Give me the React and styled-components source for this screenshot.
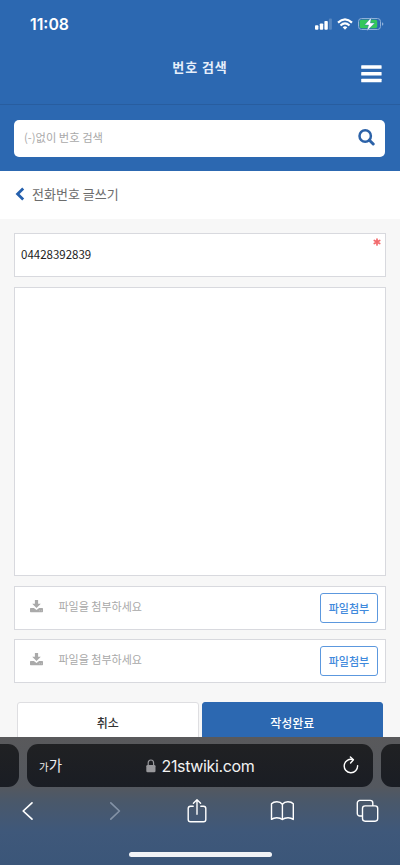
import styled, { createGlobalStyle } from 'styled-components';

const GlobalStyle = createGlobalStyle`
  * {
    box-sizing: border-box;
  }
  body {
    margin: 0;
    background: #f7f7f7;
    font-family: "Noto Sans CJK KR", sans-serif;
  }
  svg {
    display: block;
    flex: none;
  }
  input, textarea, button {
    font-family: inherit;
    margin: 0;
    outline: none;
  }
`

const Screen = styled.div`
  width: 400px;
  height: 865px;
  display: flex;
  flex-direction: column;
  overflow: hidden;
  background: #f7f7f7;
`

const StatusBar = styled.div`
  height: 46px;
  padding: 2px 16px 0 30px;
  display: flex;
  align-items: center;
  justify-content: space-between;
  background: #2c68b1;
  color: #fff;
`

const Clock = styled.span`
  padding-top: 1px;
  font: 600 15.8px/20px Inter, sans-serif;
`

const StatusIcons = styled.div`
  display: flex;
  align-items: center;
  gap: 5px;
`

const Header = styled.header`
  height: 59px;
  padding: 0 18px;
  display: grid;
  grid-template-columns: 21px 1fr 21px;
  background: #2c68b1;
  border-bottom: 1px solid #285d9f;
  color: #fff;
`

const HeaderTitle = styled.h1`
  grid-column: 2;
  margin: 11px 0 0;
  text-align: center;
  font-size: 13px;
  line-height: 20px;
  font-weight: 700;
  letter-spacing: 0.9px;
  color: #e6eefa;
`

const MenuButton = styled.button`
  align-self: start;
  margin-top: 19px;
  padding: 0;
  border: 0;
  background: none;
  color: #fff;
`

const SearchArea = styled.div`
  height: 66px;
  padding: 15px 15px 14px 14px;
  background: #2c68b1;
`

const SearchBox = styled.div`
  height: 37px;
  padding: 0 10.5px 3px 10px;
  display: flex;
  align-items: center;
  background: #fff;
  border-radius: 5px;
  color: #2c62a8;
`

const SearchInput = styled.input`
  flex: 1;
  min-width: 0;
  height: 20px;
  padding: 0 0 1px;
  border: 0;
  font-size: 11.3px;
  &::placeholder {
    color: #a9a9a9;
  }
`

const PageTitle = styled.div`
  height: 48px;
  padding: 0 15px 2px;
  display: flex;
  align-items: center;
  gap: 7px;
  background: #fff;
  color: #2560ad;
`

const PageTitleText = styled.h2`
  margin: 0;
  font-size: 13px;
  line-height: 20px;
  font-weight: 400;
  color: #6c6c6c;
`

const Form = styled.form`
  flex: 1;
  min-height: 0;
  overflow: hidden;
  padding: 14px 14px 0;
  display: flex;
  flex-direction: column;
`

const Field = styled.div`
  flex: none;
  position: relative;
  height: ${props => props.$height}px;
  margin-bottom: ${props => props.$gap}px;
  padding: ${props => props.$padding || '0'};
  display: flex;
  align-items: center;
  background: #fff;
  border: 1px solid #d8d9de;
`

const NumberInput = styled.input`
  flex: 1;
  height: 20px;
  padding: 0;
  border: 0;
  background: none;
  font-size: 11.5px;
  color: #222;
`

const Required = styled.span`
  position: absolute;
  top: 4px;
  right: 4px;
  color: #f26a6d;
`

const Content = styled.textarea`
  flex: 1;
  height: 100%;
  border: 0;
  resize: none;
  background: none;
`

const FileIcon = styled.span`
  width: 29px;
  padding-bottom: 4px;
  color: #aaa;
`

const FileText = styled.span`
  flex: 1;
  padding-bottom: 4px;
  font-size: 11px;
  line-height: 20px;
  color: #a8a8a8;
`

const FileButton = styled.button`
  width: 58px;
  height: 30px;
  padding: 0;
  border: 1px solid #5c98de;
  border-radius: 3px;
  background: #fff;
  font-size: 11px;
  font-weight: 500;
  line-height: 26px;
  color: #4089dc;
`

const Actions = styled.div`
  flex: none;
  margin: 10px 3px 0;
  display: flex;
  gap: 3px;
`

const ActionButton = styled.button`
  flex: 1;
  height: 41px;
  padding: 0;
  border: 1px solid ${props => (props.$primary ? '#2c68b1' : '#dedee1')};
  border-radius: 3px;
  background: ${props => (props.$primary ? '#2c68b1' : '#fff')};
  color: ${props => (props.$primary ? '#fff' : '#333')};
  font-size: 12px;
  font-weight: 500;
  line-height: 38px;
`

const BrowserBar = styled.footer`
  flex: none;
  height: 128px;
  display: flex;
  flex-direction: column;
  background: linear-gradient(#59595b 0, #54585f 50px, #4a586a 64px, #3f587a 94px, #3b5679 128px);
  color: #fff;
`

const TabStrip = styled.div`
  height: 43px;
  margin-top: 7px;
  display: flex;
  gap: 8px;
`

const SideTab = styled.div`
  width: 19px;
  background: linear-gradient(#202123, #1a1d24);
  border-radius: ${props => (props.$right ? '11px 0 0 11px' : '0 11px 11px 0')};
`

const AddressBar = styled.div`
  flex: 1;
  padding: 0 14px 0 12px;
  display: grid;
  grid-template-columns: 40px 1fr 40px;
  align-items: center;
  background: linear-gradient(#202123, #1a1d24);
  border-radius: 11px;
`

const TextSize = styled.span`
  font-size: 14.5px;
  line-height: 20px;
  color: #eee;
  small {
    font-size: 10.5px;
  }
`

const Url = styled.span`
  padding-left: 2px;
  display: flex;
  align-items: center;
  justify-content: center;
  gap: 6px;
  font: 400 16px/20px Inter, sans-serif;
  letter-spacing: -0.35px;
  color: #f2f2f2;
`

const Reload = styled.span`
  justify-self: end;
`

const Toolbar = styled.nav`
  height: 48px;
  padding: 0 20px 0 16px;
  display: flex;
  align-items: center;
  justify-content: space-between;
`

const HomeIndicator = styled.div`
  width: 143px;
  height: 5px;
  margin: 17px auto 0;
  border-radius: 3px;
  background: #f1f3f6;
`

const SignalIcon = () => (
  <svg width="18" height="12" viewBox="0 0 18 12" fill="#fff">
    <rect x="1" y="7.3" width="3.4" height="4.4" rx="0.9" />
    <rect x="5.8" y="5.4" width="3.4" height="6.3" rx="0.9" />
    <rect x="10.4" y="2.9" width="3.4" height="8.8" rx="0.9" />
    <rect x="14.9" y="0.5" width="3" height="11.2" rx="0.9" opacity="0.2" />
  </svg>
)

const WifiIcon = () => (
  <svg width="16" height="12" viewBox="0 0 16 12" fill="none" stroke="#fff" strokeWidth="2.2">
    <path d="M1 4.6Q8-1.8 15 4.6" />
    <path d="M3.5 7.5Q8 3.4 12.5 7.5" />
    <path d="M5.7 9.2Q8 7.3 10.3 9.2L8 11.7z" fill="#fff" stroke="none" />
  </svg>
)

const BatteryIcon = () => (
  <svg width="26" height="14" viewBox="0 0 26 14">
    <rect x="0.5" y="1.5" width="22" height="11" rx="3" fill="none" stroke="#8fb0d9" />
    <rect x="1.7" y="2.7" width="17.5" height="8.6" rx="1.8" fill="#34c75a" />
    <path d="M24 5.2q1.4.5 1.4 1.8T24 8.8z" fill="#8fb0d9" />
    <path d="M13.4.2L6.6 8h4L8.8 14 16.8 6H12.4z" fill="#fff" stroke="#2c68b1" strokeWidth="0.4" />
  </svg>
)

const MenuIcon = () => (
  <svg width="21" height="18" viewBox="0 0 21 18" fill="currentColor">
    <rect x="0.2" y="0.2" width="20.4" height="3.6" rx="0.6" />
    <rect x="0.2" y="7" width="20.4" height="3.6" rx="0.6" />
    <rect x="0.2" y="13.7" width="20.4" height="3.6" rx="0.6" />
  </svg>
)

const SearchIcon = () => (
  <svg width="17" height="17" viewBox="0 0 17 17" fill="none" stroke="currentColor">
    <circle cx="7.2" cy="7" r="5.7" strokeWidth="2.5" />
    <path d="M11.4 11.2l3.8 3.8" strokeWidth="3" strokeLinecap="round" />
  </svg>
)

const ChevronIcon = () => (
  <svg width="10" height="14" viewBox="0 0 10 14" fill="none" stroke="currentColor" strokeWidth="2.8">
    <path d="M8.2 1.6L2.6 7l5.6 5.4" />
  </svg>
)

const RequiredIcon = () => (
  <svg width="8" height="8" viewBox="0 0 8 8" fill="none" stroke="currentColor" strokeWidth="1.7" strokeLinecap="round">
    <path d="M4 1v6M1.3 2.4l5.4 3.2M6.7 2.4L1.3 5.6" />
  </svg>
)

const DownloadIcon = () => (
  <svg width="13" height="13" viewBox="0 0 13 13" fill="currentColor">
    <path d="M4.9 0h3.2v3.8h2.7L6.5 8 2.2 3.8h2.7z" />
    <path d="M.7 8h3.2l2.6 2.1L9.1 8h3.2q.7 0 .7.7v2.9q0 .7-.7.7H.7q-.7 0-.7-.7V8.7Q0 8 .7 8z" />
    <path d="M9.3 10.7h.7M11 10.7h.7" stroke="#fff" strokeWidth="0.4" />
  </svg>
)

const LockIcon = () => (
  <svg width="10" height="14" viewBox="0 0 10 14">
    <rect x="0.3" y="6" width="9.2" height="7.3" rx="1.3" fill="#98989c" />
    <path d="M2.2 6.4V3.9a2.7 2.9 0 0 1 5.4 0v2.5" fill="none" stroke="#98989c" strokeWidth="1.2" />
  </svg>
)

const ReloadIcon = () => (
  <svg width="16" height="20" viewBox="0 0 16 20" fill="none" stroke="#fff" strokeWidth="1.4" strokeLinecap="round" strokeLinejoin="round">
    <path d="M14.6 9.6A6.7 6.7 0 1 1 9.8 3.6" />
    <path d="M7.4.9L10.4 3.8 7.6 7" />
  </svg>
)

const ArrowIcon = ({ right }) => (
  <svg width="24" height="24" viewBox="0 0 24 24" fill="none" stroke={right ? '#8392a6' : '#fff'} strokeWidth="1.7" strokeLinecap="round" strokeLinejoin="round">
    <path d={right ? 'M8.8 3.8L17.4 12 8.8 20.2' : 'M16 3.8L7.2 12 16 20.2'} />
  </svg>
)

const ShareIcon = () => (
  <svg width="20" height="26" viewBox="0 0 20 26" fill="none" stroke="#fff" strokeWidth="1.4" strokeLinecap="round" strokeLinejoin="round">
    <path d="M6.2 8.2H3.5a2.3 2.3 0 0 0-2.3 2.3v11a2.3 2.3 0 0 0 2.3 2.3h13a2.3 2.3 0 0 0 2.3-2.3v-11a2.3 2.3 0 0 0-2.3-2.3h-2.7" />
    <path d="M10 16.2V2M6.4 5.3L10 1.8l3.6 3.5" />
  </svg>
)

const BookIcon = () => (
  <svg width="26" height="22" viewBox="0 0 26 22" fill="none" stroke="#fff" strokeWidth="1.4" strokeLinejoin="round">
    <path d="M13.4 4.2C12.2 2.7 10.2 1.8 7.9 1.8S3.7 2.5 2.5 3.8v15.6c1.3-1.1 3.1-1.7 5.2-1.7s4.3.6 5.7 1.9c1.4-1.3 3.5-1.9 5.6-1.9s4 .6 5.3 1.7V3.8C23.1 2.5 21.1 1.8 18.9 1.8S14.6 2.7 13.4 4.2z" />
    <path d="M13.4 4.2v15.4" />
  </svg>
)

const TabsIcon = () => (
  <svg width="24" height="24" viewBox="0 0 24 24" fill="none" stroke="#fff" strokeWidth="1.4">
    <rect x="6.5" y="6.9" width="15.2" height="15.3" rx="2.6" />
    <path d="M6 17H3.9a2.6 2.6 0 0 1-2.6-2.6V4a2.6 2.6 0 0 1 2.6-2.6h10.3A2.6 2.6 0 0 1 16.8 4v3" />
  </svg>
)

const FileRow = () => (
  <Field $height={44} $gap={9} $padding="0 7px 0 14.5px">
    <FileIcon><DownloadIcon /></FileIcon>
    <FileText>파일을 첨부하세요</FileText>
    <FileButton type="button">파일첨부</FileButton>
  </Field>
)

const App = function () {
  return (
    <Screen>
      <GlobalStyle />
      <StatusBar>
        <Clock>11:08</Clock>
        <StatusIcons>
          <SignalIcon />
          <WifiIcon />
          <BatteryIcon />
        </StatusIcons>
      </StatusBar>

      <Header>
        <HeaderTitle>번호 검색</HeaderTitle>
        <MenuButton><MenuIcon /></MenuButton>
      </Header>

      <SearchArea>
        <SearchBox>
          <SearchInput placeholder="(-)없이 번호 검색" />
          <SearchIcon />
        </SearchBox>
      </SearchArea>

      <PageTitle>
        <ChevronIcon />
        <PageTitleText>전화번호 글쓰기</PageTitleText>
      </PageTitle>

      <Form>
        <Field $height={44} $gap={10} $padding="0 6px 2px 6px">
          <NumberInput defaultValue="04428392839" />
          <Required><RequiredIcon /></Required>
        </Field>
        <Field $height={289} $gap={10}>
          <Content />
        </Field>
        <FileRow />
        <FileRow />
        <Actions>
          <ActionButton type="button">취소</ActionButton>
          <ActionButton type="button" $primary>작성완료</ActionButton>
        </Actions>
      </Form>

      <BrowserBar>
        <TabStrip>
          <SideTab />
          <AddressBar>
            <TextSize><small>가</small>가</TextSize>
            <Url><LockIcon />21stwiki.com</Url>
            <Reload><ReloadIcon /></Reload>
          </AddressBar>
          <SideTab $right />
        </TabStrip>
        <Toolbar>
          <ArrowIcon />
          <ArrowIcon right />
          <ShareIcon />
          <BookIcon />
          <TabsIcon />
        </Toolbar>
        <HomeIndicator />
      </BrowserBar>
    </Screen>
  )
}

export default App;
